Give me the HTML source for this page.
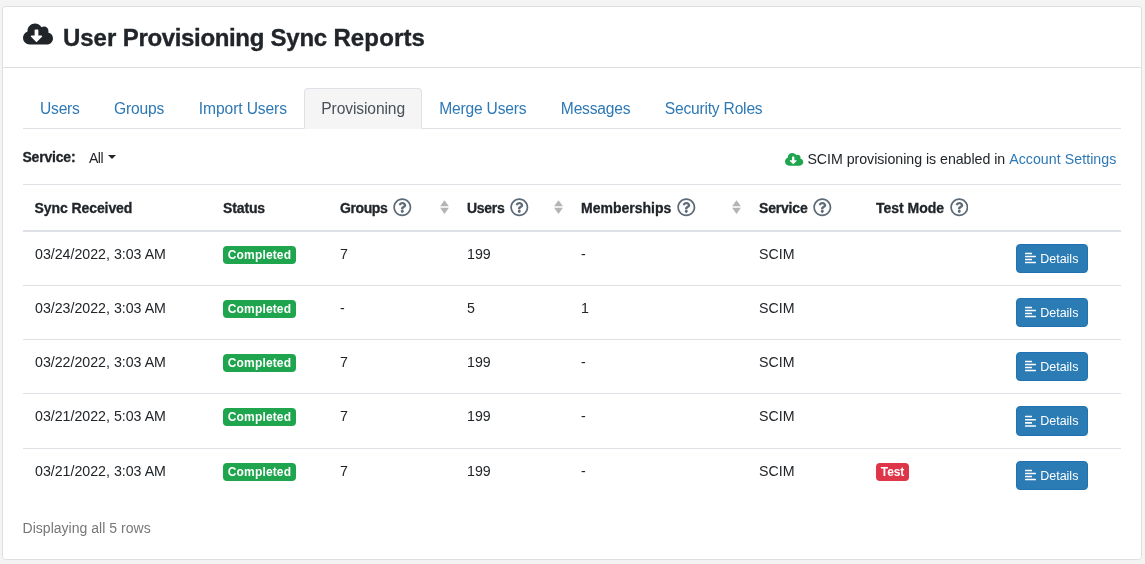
<!DOCTYPE html>
<html lang="en">
<head>
<meta charset="utf-8">
<title>User Provisioning Sync Reports</title>
<style>
*{box-sizing:border-box;}
html,body{margin:0;padding:0;}
body{width:1145px;height:564px;overflow:hidden;background:#f4f4f4;font-family:"Liberation Sans",sans-serif;color:#212529;font-size:14px;line-height:1.5;position:relative;}
a{color:#2d78b5;text-decoration:none;}
.card{will-change:transform;position:absolute;left:2px;top:6px;width:1140px;height:554px;background:#fff;border:1px solid #dfdfdf;border-radius:3.5px;}
.card-header{height:61px;border-bottom:1px solid #dfdfdf;position:relative;}
.card-header svg{position:absolute;left:20.3px;top:15px;width:30px;height:24px;fill:#212529;}
.card-header h1{-webkit-text-stroke:0.35px #212529;position:absolute;left:60px;top:13.3px;margin:0;font-size:24px;line-height:36px;font-weight:bold;color:#212529;white-space:nowrap;letter-spacing:-0.17px;}
.card-body{position:absolute;left:20px;top:81px;width:1098px;}
.tabs{height:41px;border-bottom:1px solid #dee2e6;display:flex;font-size:15.6px;line-height:22.5px;letter-spacing:-0.2px;}
.tabs a{display:block;padding:9px 0 8px;text-align:center;flex:none;border:1px solid transparent;border-top-left-radius:4px;border-top-right-radius:4px;height:41px;white-space:nowrap;}
.tabs a.active{color:#495057;background:#f5f5f5;border-color:#dee2e6 #dee2e6 #f5f5f5;}
.filter{position:relative;height:55px;}
.filter .lbl{position:absolute;left:-0.6px;top:18px;font-weight:bold;font-size:14px;line-height:21px;letter-spacing:-0.18px;-webkit-text-stroke:0.3px #212529;}
.filter .dd{position:absolute;left:66px;top:19px;font-size:14px;line-height:20px;letter-spacing:-0.5px;}
.filter .caret{position:absolute;left:85.2px;top:26px;width:0;height:0;border-top:4px solid #212529;border-left:4px solid transparent;border-right:4px solid transparent;}
.filter .scim{position:absolute;right:4.6px;top:20px;font-size:14.2px;line-height:21px;white-space:nowrap;}
.filter .scim svg{width:18.25px;height:14.6px;fill:#1ea54d;vertical-align:-2.2px;margin-right:3.7px;position:relative;left:0;}
table{border-collapse:separate;border-spacing:0;width:1098px;table-layout:fixed;}
th{-webkit-text-stroke:0.3px #212529;text-align:left;font-weight:bold;font-size:14px;line-height:21px;padding:13px 12px 0;border-top:1px solid #dee2e6;border-bottom:2px solid #dee2e6;height:48px;position:relative;white-space:nowrap;vertical-align:top;}
td{font-size:14.2px;line-height:21px;padding:0 12px;border-top:1px solid #dee2e6;height:54px;vertical-align:top;white-space:nowrap;}
tbody tr:first-child td{border-top:none;height:53px;}
tbody tr:nth-child(4) td{height:55px;}
tbody tr:nth-child(4) .btn{height:30px;}
tbody tr:nth-child(4) .btn svg{top:7.6px;height:12.6px;}
tbody tr:nth-child(3) .btn svg{top:7.3px;}
td .t{display:block;padding-top:11.6px;}
.q{display:inline-block;width:18.6px;height:18.6px;vertical-align:-3.6px;margin-left:1.9px;}
.sort{position:absolute;right:6px;top:15px;width:9px;height:14px;}
.badge{display:block;width:max-content;font-size:12px;line-height:12px;font-weight:bold;color:#fff;padding:3px 4.8px;border-radius:4px;margin-top:14px;height:18px;letter-spacing:0.15px;}
.bg-d{letter-spacing:-0.1px;}
.bg-s{background:#1ea54d;}
.bg-d{background:#de3549;}
.btn{display:block;background:#2b7bb5;border:1px solid #1f72b1;color:#fff;border-radius:4px;height:29px;width:72px;font-size:12.5px;line-height:19px;padding:5px 0 0 23.2px;position:relative;margin-top:12px;}
.btn svg{position:absolute;left:8px;top:7.05px;width:10.95px;height:12.1px;fill:#fff;}
.foot{position:absolute;left:-0.5px;top:430px;font-size:14px;line-height:21px;color:#777;letter-spacing:0.03px;}
</style>
</head>
<body>
<div class="card">
  <div class="card-header">
    <svg viewBox="0 0 640 512"><path d="M537.6 226.6c4.100-10.700 6.400-22.400 6.400-34.600 0-53-43-96-96-96-19.700 0-38.100 6-53.300 16.200C367 64.200 315.300 32 256 32c-88.400 0-160 71.600-160 160 0 2.700.1 5.400.2 8.100C40.200 219.800 0 273.200 0 336c0 79.500 64.500 144 144 144h368c70.700 0 128-57.300 128-128 0-61.900-44-113.600-102.400-125.400zm-132.900 88.700L299.300 420.700c-6.200 6.200-16.400 6.200-22.600 0L171.300 315.300c-10.100-10.100-2.900-27.300 11.300-27.300H248V176c0-8.800 7.200-16 16-16h48c8.800 0 16 7.200 16 16v112h65.400c14.200 0 21.400 17.200 11.300 27.300z"/></svg>
    <h1><span style="letter-spacing:-0.05px">User </span><span style="letter-spacing:-0.345px">Provisioning</span><span style="letter-spacing:-0.22px"> Sync </span><span style="letter-spacing:0.13px">Reports</span></h1>
  </div>
  <div class="card-body">
    <div class="tabs"><a href="#" style="width:73.7px">Users</a><a href="#" style="width:84.8px">Groups</a><a href="#" style="width:122.8px;letter-spacing:-0.1px">Import Users</a><a href="#" class="active" style="width:117.7px;letter-spacing:-0.1px">Provisioning</a><a href="#" style="width:121.7px">Merge Users</a><a href="#" style="width:103.9px">Messages</a><a href="#" style="width:132.1px">Security Roles</a></div>
    <div class="filter">
      <span class="lbl">Service:</span>
      <span class="dd">All</span><span class="caret"></span>
      <span class="scim"><svg viewBox="0 0 640 512"><path d="M537.6 226.6c4.100-10.700 6.400-22.400 6.400-34.600 0-53-43-96-96-96-19.700 0-38.100 6-53.300 16.200C367 64.200 315.300 32 256 32c-88.400 0-160 71.600-160 160 0 2.700.1 5.400.2 8.100C40.200 219.800 0 273.200 0 336c0 79.500 64.500 144 144 144h368c70.700 0 128-57.300 128-128 0-61.900-44-113.600-102.400-125.400zm-132.900 88.700L299.300 420.700c-6.200 6.200-16.400 6.200-22.600 0L171.300 315.300c-10.100-10.100-2.900-27.300 11.300-27.300H248V176c0-8.800 7.200-16 16-16h48c8.800 0 16 7.200 16 16v112h65.400c14.200 0 21.400 17.200 11.300 27.300z"/></svg><span style="letter-spacing:-0.03px">SCIM provisioning is enabled in </span><a href="#" style="letter-spacing:0.05px">Account Settings</a></span>
    </div>
    <table>
      <colgroup><col style="width:188px"><col style="width:117px"><col style="width:127px"><col style="width:114px"><col style="width:178px"><col style="width:117px"><col style="width:140px"><col style="width:117px"></colgroup>
      <thead><tr><th style="padding-left:11.5px"><span style="letter-spacing:-0.08px">Sync Received</span></th><th><span style="letter-spacing:-0.13px">Status</span></th><th><span style="letter-spacing:-0.42px">Groups</span> <svg class="q" viewBox="0 0 512 512"><use href="#qc"/></svg><svg class="sort" viewBox="0 0 9 14"><use href="#so"/></svg></th><th><span style="letter-spacing:-0.28px">Users</span> <svg class="q" viewBox="0 0 512 512"><use href="#qc"/></svg><svg class="sort" viewBox="0 0 9 14"><use href="#so"/></svg></th><th><span style="letter-spacing:0px">Memberships</span> <svg class="q" viewBox="0 0 512 512"><use href="#qc"/></svg><svg class="sort" viewBox="0 0 9 14"><use href="#so"/></svg></th><th><span style="letter-spacing:-0.19px">Service</span> <svg class="q" viewBox="0 0 512 512"><use href="#qc"/></svg></th><th><span style="letter-spacing:-0.02px">Test Mode</span> <svg class="q" viewBox="0 0 512 512"><use href="#qc"/></svg></th><th></th></tr></thead>
      <tbody>
<tr><td><span class="t">03/24/2022, 3:03 AM</span></td><td><span class="badge bg-s">Completed</span></td><td><span class="t">7</span></td><td><span class="t">199</span></td><td><span class="t">-</span></td><td><span class="t">SCIM</span></td><td></td><td><a class="btn" href="#"><svg viewBox="0 0 448 512" preserveAspectRatio="none"><use href="#al"/></svg>Details</a></td></tr>
<tr><td><span class="t">03/23/2022, 3:03 AM</span></td><td><span class="badge bg-s">Completed</span></td><td><span class="t">-</span></td><td><span class="t">5</span></td><td><span class="t">1</span></td><td><span class="t">SCIM</span></td><td></td><td><a class="btn" href="#"><svg viewBox="0 0 448 512" preserveAspectRatio="none"><use href="#al"/></svg>Details</a></td></tr>
<tr><td><span class="t">03/22/2022, 3:03 AM</span></td><td><span class="badge bg-s">Completed</span></td><td><span class="t">7</span></td><td><span class="t">199</span></td><td><span class="t">-</span></td><td><span class="t">SCIM</span></td><td></td><td><a class="btn" href="#"><svg viewBox="0 0 448 512" preserveAspectRatio="none"><use href="#al"/></svg>Details</a></td></tr>
<tr><td><span class="t">03/21/2022, 5:03 AM</span></td><td><span class="badge bg-s">Completed</span></td><td><span class="t">7</span></td><td><span class="t">199</span></td><td><span class="t">-</span></td><td><span class="t">SCIM</span></td><td></td><td><a class="btn" href="#"><svg viewBox="0 0 448 512" preserveAspectRatio="none"><use href="#al"/></svg>Details</a></td></tr>
<tr><td><span class="t">03/21/2022, 3:03 AM</span></td><td><span class="badge bg-s">Completed</span></td><td><span class="t">7</span></td><td><span class="t">199</span></td><td><span class="t">-</span></td><td><span class="t">SCIM</span></td><td><span class="badge bg-d">Test</span></td><td><a class="btn" href="#"><svg viewBox="0 0 448 512" preserveAspectRatio="none"><use href="#al"/></svg>Details</a></td></tr>
      </tbody>
    </table>
    <div class="foot">Displaying all 5 rows</div>
  </div>
</div>
<svg width="0" height="0" style="position:absolute">
  <defs>
    <g id="qc"><path fill="#5c6b77" d="M256 8C119.043 8 8 119.083 8 256c0 136.997 111.043 248 248 248s248-111.003 248-248C504 119.083 392.957 8 256 8zm0 448c-110.532 0-200-89.431-200-200 0-110.495 89.472-200 200-200 110.491 0 200 89.471 200 200 0 110.530-89.431 200-200 200zm107.244-255.200c0 67.052-72.421 68.084-72.421 92.863V300c0 6.627-5.373 12-12 12h-45.647c-6.627 0-12-5.373-12-12v-8.659c0-35.745 27.100-50.034 47.579-61.516 17.561-9.845 28.324-16.541 28.324-29.579 0-17.246-21.999-28.693-39.784-28.693-23.189 0-33.894 10.977-48.942 29.969-4.057 5.120-11.460 6.071-16.666 2.124l-27.824-21.098c-5.107-3.872-6.251-11.066-2.644-16.363C184.846 131.491 214.940 112 261.794 112c49.071 0 101.450 38.304 101.450 88.800zM298 368c0 23.159-18.841 42-42 42s-42-18.841-42-42 18.841-42 42-42 42 18.841 42 42z"/></g>
    <g id="al"><path d="M12.83 352h262.340A12.820 12.820 0 0 0 288 339.170v-38.340A12.820 12.820 0 0 0 275.170 288H12.830A12.820 12.820 0 0 0 0 300.830v38.340A12.820 12.820 0 0 0 12.830 352zm0-256h262.340A12.820 12.820 0 0 0 288 83.170V44.830A12.820 12.820 0 0 0 275.170 32H12.830A12.820 12.820 0 0 0 0 44.830v38.340A12.820 12.820 0 0 0 12.830 96zM432 160H16a16 16 0 0 0-16 16v32a16 16 0 0 0 16 16h416a16 16 0 0 0 16-16v-32a16 16 0 0 0-16-16zm0 256H16a16 16 0 0 0-16 16v32a16 16 0 0 0 16 16h416a16 16 0 0 0 16-16v-32a16 16 0 0 0-16-16z"/></g>
    <g id="so">
      <path d="M4.500 0.300L8.900 6.200H0.100z" fill="#b4b4b4"/>
      <path d="M4.500 13.900L8.900 7.750H0.100z" fill="#b4b4b4"/>
    </g>
  </defs>
</svg>
</body>
</html>
